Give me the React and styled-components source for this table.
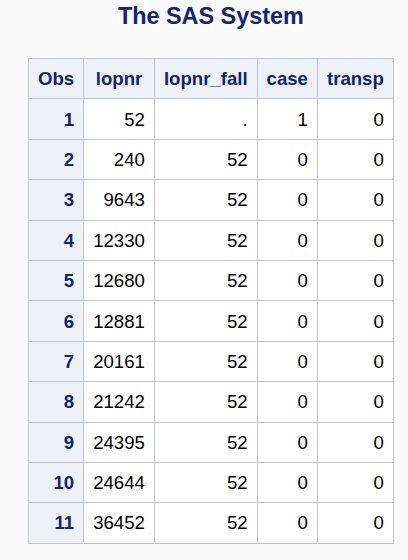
import React from "react";
import styled, { createGlobalStyle } from "styled-components";

const rows = [
  [1, 52, ".", 1, 0],
  [2, 240, 52, 0, 0],
  [3, 9643, 52, 0, 0],
  [4, 12330, 52, 0, 0],
  [5, 12680, 52, 0, 0],
  [6, 12881, 52, 0, 0],
  [7, 20161, 52, 0, 0],
  [8, 21242, 52, 0, 0],
  [9, 24395, 52, 0, 0],
  [10, 24644, 52, 0, 0],
  [11, 36452, 52, 0, 0],
];

const columns = ["Obs", "lopnr", "lopnr_fall", "case", "transp"];

const GlobalStyle = createGlobalStyle`
  html, body {
    margin: 0;
    padding: 0;
    background: #fafbfe;
  }
  body {
    font-family: "Liberation Sans", Arial, sans-serif;
  }
`;

const Page = styled.div`
  width: 408px;
  height: 560px;
  padding-left: 28px;
  box-sizing: border-box;
  overflow: hidden;
`;

const Content = styled.div`
  display: inline-flex;
  flex-direction: column;
  align-items: center;
`;

const Title = styled.h1`
  margin: 3px 0 28px;
  font-size: 23.4px;
  line-height: 27px;
  font-weight: bold;
  color: #112277;
  text-align: center;
`;

const Table = styled.table`
  border-collapse: collapse;
  border: 1px solid #c4c4c4;
  font-size: 18.6px;

  th, td {
    border: 1px solid #c4c4c4;
    padding: 0 9px;
    height: 40.4px;
    line-height: 21px;
    white-space: nowrap;
    box-sizing: border-box;
  }
`;

const HeadCell = styled.th`
  background: #edf2f9;
  color: #112277;
  font-weight: bold;
  text-align: center;
`;

const RowHead = styled.th`
  background: #edf2f9;
  color: #112277;
  font-weight: bold;
  text-align: right;
`;

const Cell = styled.td`
  background: #ffffff;
  color: #000000;
  text-align: right;
`;

export default function App() {
  return (
    <Page>
      <GlobalStyle />
      <Content>
        <Title>The SAS System</Title>
        <Table>
          <thead>
            <tr>
              {columns.map((c) => (
                <HeadCell key={c}>{c}</HeadCell>
              ))}
            </tr>
          </thead>
          <tbody>
            {rows.map((r) => (
              <tr key={r[0]}>
                <RowHead>{r[0]}</RowHead>
                {r.slice(1).map((v, i) => (
                  <Cell key={i}>{v}</Cell>
                ))}
              </tr>
            ))}
          </tbody>
        </Table>
      </Content>
    </Page>
  );
}
